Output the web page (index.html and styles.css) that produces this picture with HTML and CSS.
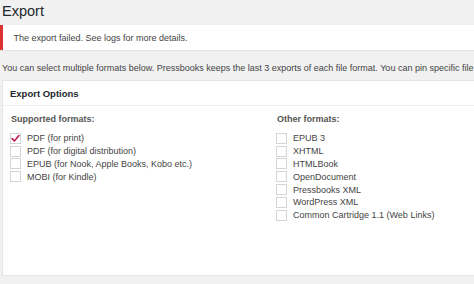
FILE: index.html
```html
<!DOCTYPE html>
<html>
<head>
<meta charset="utf-8">
<link rel="stylesheet" href="styles.css">
</head>
<body>
<div class="wrap">
  <h1 class="title">Export</h1>
  <div class="notice">The export failed. See logs for more details.</div>
  <p class="desc">You can select multiple formats below. Pressbooks keeps the last 3 exports of each file format. You can pin specific file</p>
  <div class="card">
    <div class="card-head">Export Options</div>
    <div class="card-body">
      <div class="col">
        <div class="col-title">Supported formats:</div>
        <ul class="list">
          <li><span class="box checked"><svg viewBox="0 0 11 11" width="11" height="11"><path d="M2.2 5.6 L4.4 8 L8.9 2.6" fill="none" stroke="#c2185b" stroke-width="1.6" stroke-linecap="round" stroke-linejoin="round"/></svg></span>PDF (for print)</li>
          <li><span class="box"></span>PDF (for digital distribution)</li>
          <li><span class="box"></span>EPUB (for Nook, Apple Books, Kobo etc.)</li>
          <li><span class="box"></span>MOBI (for Kindle)</li>
        </ul>
      </div>
      <div class="col">
        <div class="col-title">Other formats:</div>
        <ul class="list">
          <li><span class="box"></span>EPUB 3</li>
          <li><span class="box"></span>XHTML</li>
          <li><span class="box"></span>HTMLBook</li>
          <li><span class="box"></span>OpenDocument</li>
          <li><span class="box"></span>Pressbooks XML</li>
          <li><span class="box"></span>WordPress XML</li>
          <li><span class="box"></span>Common Cartridge 1.1 (Web Links)</li>
        </ul>
      </div>
    </div>
  </div>
</div>
</body>
</html>
```
FILE: styles.css
```css
html, body {
  margin: 0;
  padding: 0;
  overflow: hidden;
}
body {
  background: #f1f1f1;
  font-family: "Liberation Sans", Arial, sans-serif;
  font-size: 9px;
  color: #444;
}
.wrap {
  padding-left: 2px;
}
.title {
  margin: 0;
  font-size: 14.5px;
  font-weight: 400;
  line-height: 22px;
  color: #23282d;
}
.notice {
  margin: 3px 0 0 -2px;
  height: 25px;
  background: #fff;
  border-left: 3.5px solid #dc3232;
  padding-left: 10.5px;
  display: flex;
  align-items: center;
  color: #444;
  box-shadow: 0 1px 1px rgba(0,0,0,0.05);
}
.desc {
  margin: 12px 0 0 0;
  line-height: 12px;
  white-space: nowrap;
}
.card {
  margin: 6px -4px 0 0;
  height: 196px;
  box-sizing: border-box;
  background: #fff;
  border: 1px solid #e5e5e5;
  box-shadow: 0 1px 1px rgba(0,0,0,0.04);
}
.card-head {
  height: 25px;
  box-sizing: border-box;
  border-bottom: 1px solid #eee;
  padding-left: 7px;
  display: flex;
  align-items: center;
  font-weight: 700;
  font-size: 9.5px;
  color: #23282d;
}
.card-body {
  display: grid;
  grid-template-columns: 266px 1fr;
  padding: 7px 0 0 7px;
}
.col-title {
  line-height: 12px;
  font-weight: 700;
  color: #555;
  padding-left: 1px;
}
.list {
  list-style: none;
  margin: 7px 0 0 0;
  padding: 0;
}
.list li {
  height: 12.8px;
  display: flex;
  align-items: center;
  color: #444;
}
.box {
  width: 11px;
  height: 11px;
  box-sizing: border-box;
  border: 1px solid #d4d4d4;
  background: #fff;
  margin-right: 6px;
  flex: none;
  display: flex;
}
.box.checked svg {
  display: block;
  margin: -1px;
}
```
